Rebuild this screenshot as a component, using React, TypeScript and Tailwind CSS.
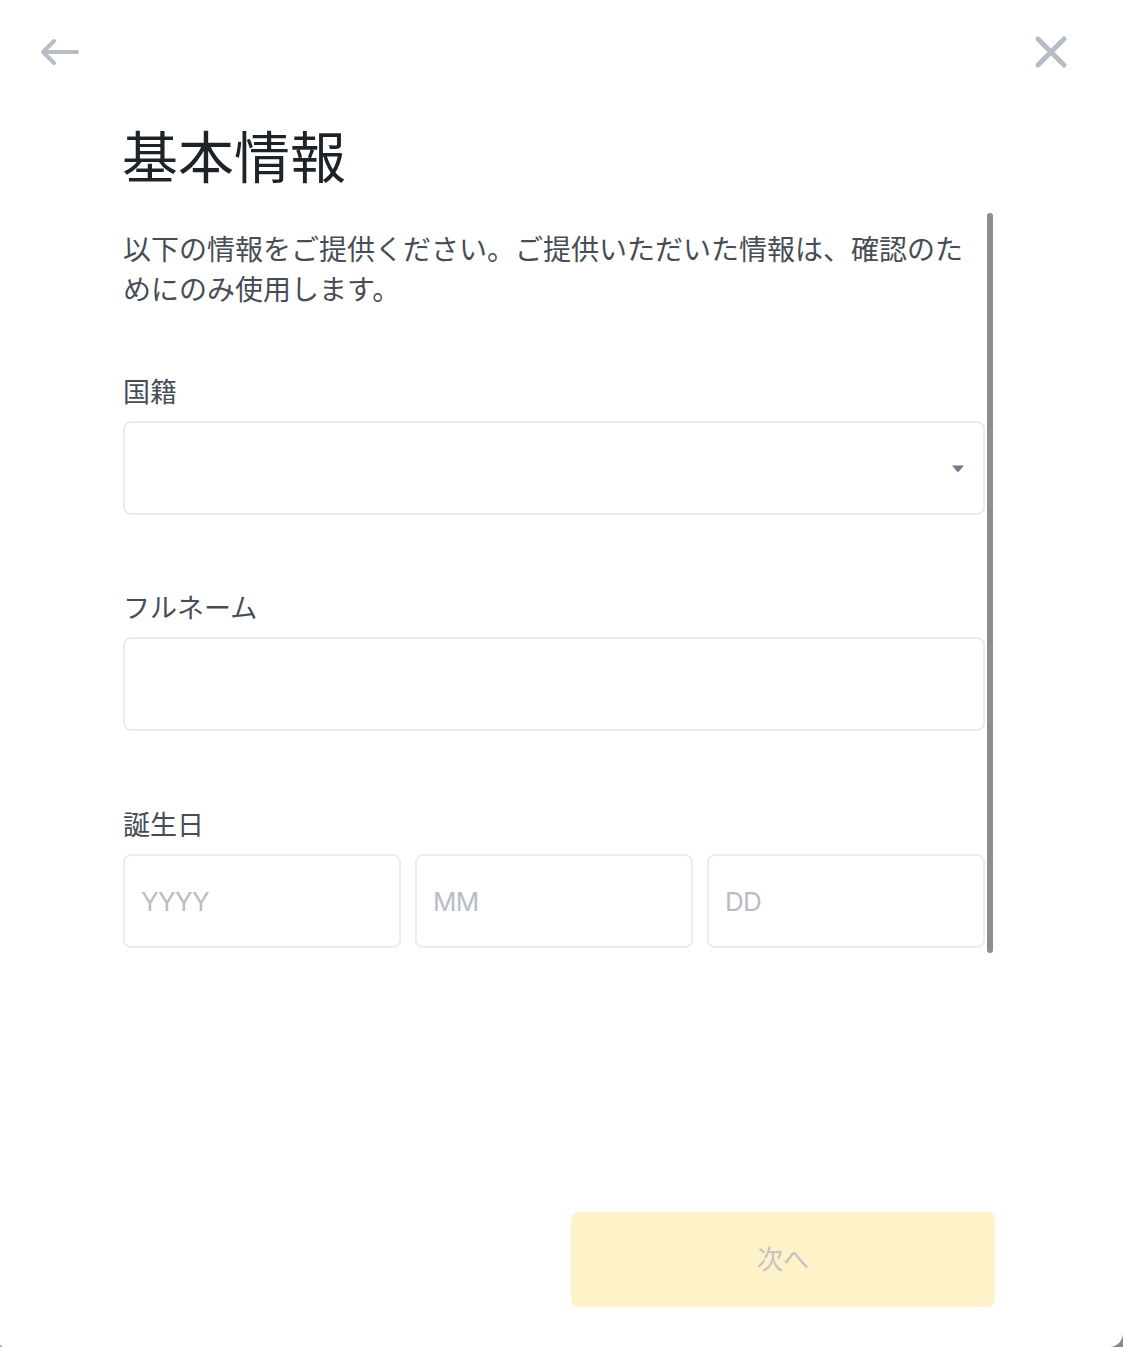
const FONT = "font-['Inter','Noto_Sans_CJK_JP',sans-serif]";

// ── Field wrapper ──
const Field = ({ label, children }: { label: string; children: React.ReactNode }) => (
  <div className="flex flex-col gap-[8px]">
    <label className="text-[27px] leading-[40px] text-[#474d57]">{label}</label>
    {children}
  </div>
);

const Box = ({
  placeholder,
  className = "",
  children,
}: {
  placeholder?: string;
  className?: string;
  children?: React.ReactNode;
}) => (
  <div
    className={`relative flex items-center h-[94px] border-2 border-[#eaecef] rounded-[8px] px-[16px] bg-white ${className}`}
  >
    {placeholder && (
      <span className="text-[26px] text-[#b7bdc6] tracking-tight">{placeholder}</span>
    )}
    {children}
  </div>
);

const App = () => {
  return (
    <div className={`w-[1123px] h-[1347px] bg-[#8a8a8a] ${FONT}`}>
      <div className="w-full h-full bg-white rounded-br-[14px] rounded-bl-[4px] flex flex-col">
        {/* ── Header icons ── */}
        <div className="flex items-center justify-between pl-[38px] pr-[55px] pt-[32px] h-[72px]">
          <svg width="42" height="40" viewBox="0 0 42 40" fill="none">
            <path
              d="M39 20H5M16 9L5 20L16 31"
              stroke="#b7bdc6"
              strokeWidth="4"
              strokeLinecap="round"
              strokeLinejoin="round"
            />
          </svg>
          <svg width="34" height="34" viewBox="0 0 34 34" fill="none">
            <path d="M4 4L30 30M30 4L4 30" stroke="#b7bdc6" strokeWidth="5" strokeLinecap="round" />
          </svg>
        </div>

        {/* ── Title ── */}
        <h1 className="pl-[122px] mt-[50px] text-[56px] leading-[72px] text-[#1e2329]">基本情報</h1>

        {/* ── Scroll area ── */}
        <div className="flex pl-[123px] mt-[19px] gap-[2px]">
          <div className="w-[862px] flex flex-col pt-[17px] pb-[5px]">
            <p className="text-[28px] leading-[40px] text-[#474d57]">
              以下の情報をご提供ください。ご提供いただいた情報は、確認のためにのみ使用します。
            </p>

            <div className="mt-[63px]">
              <Field label="国籍">
                <Box className="w-full">
                  <svg className="absolute right-[18px] top-[42px]" width="14" height="8" viewBox="0 0 14 8">
                    <path d="M1 0.5H13L7 7.5Z" fill="#707a8a" />
                  </svg>
                </Box>
              </Field>
            </div>

            <div className="mt-[74px]">
              <Field label="フルネーム">
                <Box className="w-full" />
              </Field>
            </div>

            <div className="mt-[75px]">
              <Field label="誕生日">
                <div className="flex gap-[14px]">
                  <Box placeholder="YYYY" className="flex-1" />
                  <Box placeholder="MM" className="flex-1" />
                  <Box placeholder="DD" className="flex-1" />
                </div>
              </Field>
            </div>
          </div>

          {/* Scrollbar thumb */}
          <div className="w-[6px] bg-[#8e8e8e] rounded-full" />
        </div>

        {/* ── Footer ── */}
        <div className="flex-1" />
        <div className="flex justify-end pr-[128px] pb-[40px]">
          <button className="w-[424px] h-[95px] rounded-[8px] bg-[#fef2c9] text-[26px] text-[#c3c3c3]">
            次へ
          </button>
        </div>
      </div>
    </div>
  );
};

export default App;
